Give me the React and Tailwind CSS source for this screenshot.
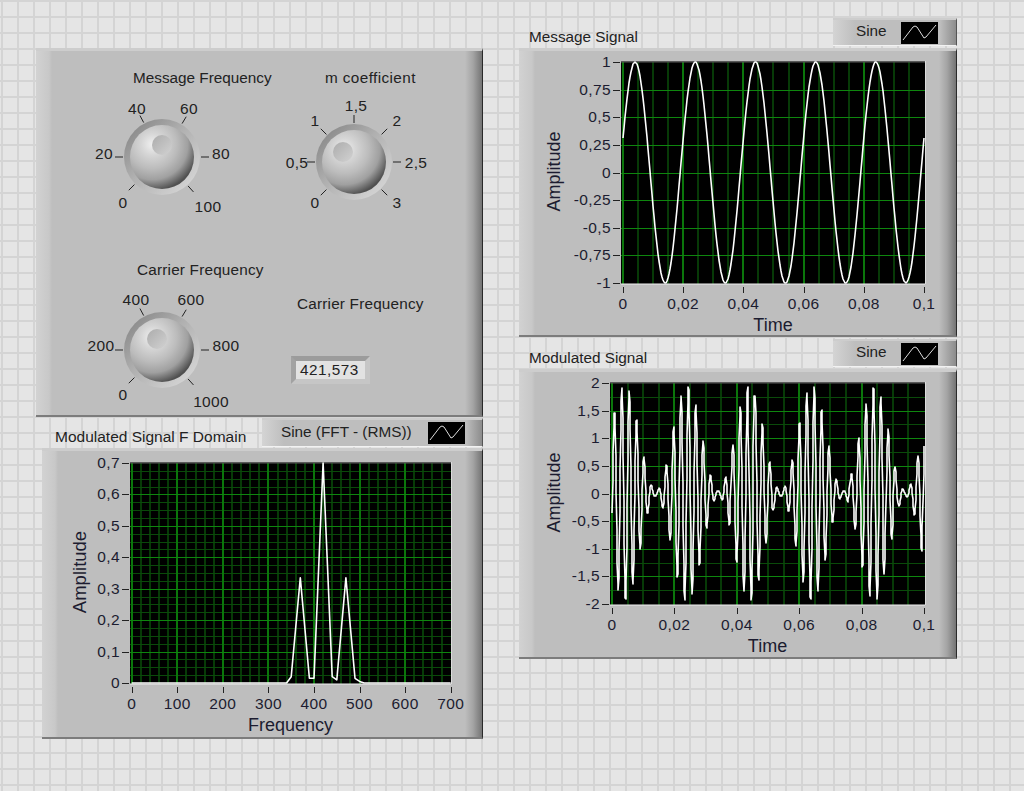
const FONT = { fontFamily: '"Liberation Sans", Arial, sans-serif' }

function range(start, end, step) {
  const out = []
  for (let v = start; v <= end + 1e-9; v += step) out.push(v)
  return out
}

function Panel({ className = '', children }) {
  return (
    <div className={`relative border-t-[3px] border-b-2 border-r border-t-[#cdcdcd] border-b-[#7c7c7c] border-r-[#2a2a2a] bg-[linear-gradient(to_right,#d2d2d2_0,#c8c8c8_13px,#bebebe_16px,#bebebe_calc(100%-17px),#a4a4a4_calc(100%-9px),#747474_100%)] ${className}`}>
      {children}
    </div>
  )
}

function SineSwatch({ className = '' }) {
  return (
    <svg viewBox="0 0 37 22" className={`block bg-black ${className}`}>
      <polyline points="2,18 12,5 14,4 16,5 23,16 25,15 35,3" fill="none" stroke="#dcdcdc" strokeWidth="1" />
    </svg>
  )
}

function Legend({ label, className = '' }) {
  return (
    <div className={`flex items-center border-t-2 border-b border-r border-t-[#cdcdcd] border-b-[#f2f2f2] border-r-[#555] bg-[linear-gradient(to_right,#d4d4d4_0,#c6c6c6_14px,#bebebe_22px,#bebebe_calc(100%-16px),#8c8c8c_100%)] ${className}`}>
      <span className="pb-[3px] text-[15.3px] leading-none text-[#222] whitespace-nowrap">{label}</span>
      <SineSwatch className="w-[37px] h-[22px]" />
    </div>
  )
}

function Knob({ dimple, scale, className = '' }) {
  return (
    <div className={`relative w-[78px] h-[78px] ${className}`}>
      <div className="absolute inset-[1px] rounded-full bg-[linear-gradient(135deg,#8c8c8c_12%,#b0b0b0_45%,#d4d4d4_88%)]" />
      <div className="absolute inset-[7px] rounded-full bg-[radial-gradient(circle_at_35%_30%,#f0f0f0_0,#d6d6d6_18%,#bcbcbc_40%,#a0a0a0_58%,#505050_76%)]" />
      <div
        className="absolute w-[20px] h-[20px] rounded-full bg-[linear-gradient(135deg,#acacac,#d2d2d2)]"
        style={{ left: 29 + dimple[0], top: 29 + dimple[1] }}
      />
      {scale.map((s) => (
        <span
          key={s.t}
          className="absolute -translate-x-1/2 -translate-y-1/2 text-[15.5px] leading-none tracking-[0.3px] text-[#222] whitespace-nowrap"
          style={{ left: 39 + s.x, top: 39 + s.y }}
        >
          {s.t}
        </span>
      ))}
      <svg className="absolute left-[-20px] top-[-20px] w-[118px] h-[118px] overflow-visible" viewBox="-59 -59 118 118">
        {scale.map((s) => {
          const a = (s.a * Math.PI) / 180
          return (
            <line
              key={s.t}
              x1={Math.cos(a) * 39}
              y1={Math.sin(a) * 39}
              x2={Math.cos(a) * 47}
              y2={Math.sin(a) * 47}
              stroke="#222"
              strokeWidth="1"
            />
          )
        })}
      </svg>
    </div>
  )
}

function Graph({ w, h, plot, xTicks, yTicks, xMinor, yMinor, xLabel, yLabelX, yLabelSize = 18, trace, snap = false }) {
  const sx = (v) => plot.x0 + ((v - plot.xMin) / (plot.xMax - plot.xMin)) * (plot.x1 - plot.x0)
  const sy = (v) => plot.y0 + ((plot.yMax - v) / (plot.yMax - plot.yMin)) * (plot.y1 - plot.y0)
  const gx = (v) => Math.round(sx(v))
  const gy = (v) => Math.round(sy(v)) + 0.5
  const inX = (v) => gx(v) > plot.left + 1 && gx(v) < plot.right - 1
  const inY = (v) => gy(v) > plot.top + 2 && gy(v) < plot.bottom - 1
  const pts = trace
    .map(([a, b]) => (snap ? `${Math.round(sx(a))},${Math.round(sy(b))}` : `${sx(a).toFixed(1)},${sy(b).toFixed(1)}`))
    .join(' ')
  return (
    <svg width={w} height={h} className="block" style={FONT}>
      <rect x={plot.left} y={plot.top} width={plot.right - plot.left} height={plot.bottom - plot.top} fill="#000" />
      {xMinor.filter(inX).map((v) => (
        <line key={v} x1={gx(v)} x2={gx(v)} y1={plot.top} y2={plot.bottom} stroke="#073a07" strokeWidth="2" />
      ))}
      {yMinor.filter(inY).map((v) => (
        <line key={v} y1={gy(v)} y2={gy(v)} x1={plot.left} x2={plot.right} stroke="#0a4a0a" />
      ))}
      {xTicks.filter((t) => inX(t.v)).map((t) => (
        <line key={t.v} x1={gx(t.v)} x2={gx(t.v)} y1={plot.top} y2={plot.bottom} stroke="#0b760b" strokeWidth="2" />
      ))}
      {yTicks.filter((t) => inY(t.v)).map((t) => (
        <line key={t.v} y1={gy(t.v)} y2={gy(t.v)} x1={plot.left} x2={plot.right} stroke="#0e860e" />
      ))}
      <rect x={plot.left} y={plot.top} width={plot.right - plot.left} height="1.5" fill="#5a5a5a" />
      <polyline points={pts} fill="none" stroke="#fff" strokeWidth="1.6" strokeLinejoin="round" />
      <line x1={plot.left} x2={plot.right} y1={plot.bottom} y2={plot.bottom} stroke="#efefef" />
      <line x1={plot.right + 0.5} x2={plot.right + 0.5} y1={plot.top} y2={plot.bottom} stroke="#dcdcdc" />
      {xTicks.map((t) => (
        <g key={t.v}>
          <line x1={gx(t.v) + 0.5} x2={gx(t.v) + 0.5} y1={plot.bottom + 3} y2={plot.bottom + 9} stroke="#222" />
          <text x={sx(t.v)} y={plot.bottom + 25} textAnchor="middle" fontSize="15.5" letterSpacing="0.4" fill="#1c1c30">{t.t}</text>
        </g>
      ))}
      {yTicks.map((t) => (
        <g key={t.v}>
          <line x1={plot.left - 8} x2={plot.left - 1} y1={gy(t.v)} y2={gy(t.v)} stroke="#222" />
          <text x={plot.left - 10} y={sy(t.v) + 5} textAnchor="end" fontSize="15.5" letterSpacing="0.4" fill="#1c1c30">{t.t}</text>
        </g>
      ))}
      <text x={(plot.left + plot.right) / 2} y={plot.bottom + 47} textAnchor="middle" fontSize="18" fill="#1c1c30">{xLabel}</text>
      <text
        transform={`translate(${yLabelX} ${(plot.top + plot.bottom) / 2 - 1}) rotate(-90)`}
        textAnchor="middle"
        fontSize={yLabelSize}
        fill="#1c1c30"
      >
        Amplitude
      </text>
    </svg>
  )
}

const timeTicks = [0, 0.02, 0.04, 0.06, 0.08, 0.1].map((v) => ({ v, t: String(v).replace('.', ',') }))

const msg = (t) => Math.sin(2 * Math.PI * 50 * t + 0.1 * Math.PI)
// roughly one sample per pixel gives the stepped look of the trace
const msgTrace = range(0, 301, 1).map((i) => {
  const t = i / 3010
  return [t, msg(t)]
})
const modTrace = range(0, 624, 1).map((i) => {
  const t = i / 6240
  return [t, (1 + 0.95 * msg(t)) * Math.sin(2 * Math.PI * 421.573 * t - 0.27)]
})

const specTrace = [
  [0, 0], [340, 0], [350, 0.02], [370, 0.335], [390, 0.015], [400, 0.015], [420, 0.7],
  [440, 0.02], [450, 0.01], [470, 0.335], [490, 0.015], [500, 0.005], [510, 0], [700, 0],
]

export default function App() {
  return (
    <div
      className="flex w-[1024px] h-[791px] overflow-hidden bg-[#e5e5e5] bg-[linear-gradient(to_right,#d4d4d4_2px,transparent_2px),linear-gradient(to_bottom,#d4d4d4_2px,transparent_2px)] bg-[size:16px_16px] bg-[position:1px_0px] text-[#222]"
      style={FONT}
    >
      {/* left column */}
      <div className="ml-[36px] w-[447px] pt-[48px]">
        <Panel className="h-[369px]">
          <div className="grid grid-cols-[245px_1fr]">
            <div className="h-[193px] pt-[19px]">
              <p className="ml-[97px] text-[15.3px] leading-none whitespace-nowrap">Message Frequency</p>
              <Knob
                className="ml-[87px] mt-[33px]"
                dimple={[0, -12]}
                scale={[
                  { t: '40', a: -118, x: -25, y: -48 },
                  { t: '60', a: -59, x: 27, y: -48 },
                  { t: '20', a: 180, x: -58, y: -3 },
                  { t: '80', a: 0, x: 59, y: -3 },
                  { t: '0', a: 135, x: -39, y: 46 },
                  { t: '100', a: 48, x: 46, y: 50 },
                ]}
              />
            </div>
            <div className="h-[193px] pt-[19px]">
              <p className="ml-[44px] text-[15.3px] leading-none tracking-[0.4px] whitespace-nowrap">m coefficient</p>
              <Knob
                className="ml-[34px] mt-[38px]"
                dimple={[-11, -10]}
                scale={[
                  { t: '1,5', a: -90, x: 2, y: -56 },
                  { t: '1', a: -135, x: -39, y: -41 },
                  { t: '2', a: -45, x: 43, y: -41 },
                  { t: '0,5', a: 180, x: -57, y: 1 },
                  { t: '2,5', a: 0, x: 62, y: 1 },
                  { t: '0', a: 135, x: -39, y: 41 },
                  { t: '3', a: 45, x: 43, y: 41 },
                ]}
              />
            </div>
            <div className="pt-[18px]">
              <p className="ml-[101px] text-[15.3px] leading-none tracking-[0.2px] whitespace-nowrap">Carrier Frequency</p>
              <Knob
                className="ml-[87px] mt-[34px]"
                dimple={[-5, -11]}
                scale={[
                  { t: '400', a: -118, x: -26, y: -50 },
                  { t: '600', a: -59, x: 29, y: -50 },
                  { t: '200', a: 180, x: -61, y: -4 },
                  { t: '800', a: 0, x: 64, y: -4 },
                  { t: '0', a: 135, x: -39, y: 45 },
                  { t: '1000', a: 48, x: 49, y: 52 },
                ]}
              />
            </div>
            <div className="pt-[52px]">
              <p className="ml-[16px] text-[15.3px] leading-none tracking-[0.2px] whitespace-nowrap">Carrier Frequency</p>
              <div className="ml-[10px] mt-[45px] w-[79px] h-[28px] border-[5px] border-t-[#9c9c9c] border-l-[#a2a2a2] border-b-[#c6c6c6] border-r-[#c6c6c6] bg-[#e2e2e2] pl-[4px] text-[15.3px] leading-[18px] tracking-[0.5px]">
                421,573
              </div>
            </div>
          </div>
        </Panel>

        <div className="flex h-[31px] items-end">
          <p className="ml-[19px] w-[207px] pb-[4px] text-[15.5px] leading-none whitespace-nowrap">Modulated Signal F Domain</p>
          <Legend label="Sine (FFT - (RMS))" className="mb-[1px] w-[221px] h-[29px] pl-[19px] gap-[16px]" />
        </div>

        <Panel className="ml-[6px] h-[291px]">
          <Graph
            w={440}
            h={286}
            plot={{ left: 88, right: 409, top: 11, bottom: 233, x0: 89.7, x1: 408.7, y0: 12, y1: 232, xMin: 0, xMax: 700, yMin: 0, yMax: 0.7 }}
            xTicks={range(0, 700, 100).map((v) => ({ v, t: String(v) }))}
            yTicks={range(0, 7, 1).map((i) => ({ v: i / 10, t: i === 0 ? '0' : `0,${i}` }))}
            xMinor={range(0, 700, 20)}
            yMinor={range(0, 0.7, 0.025)}
            xLabel="Frequency"
            yLabelX={44}
            yLabelSize={18.5}
            trace={specTrace}
          />
        </Panel>
      </div>

      {/* right column */}
      <div className="ml-[36px] w-[438px] pt-[18px]">
        <div className="flex h-[30px] items-end justify-between">
          <p className="ml-[10px] pb-[4px] text-[15.3px] leading-none">Message Signal</p>
          <Legend label="Sine" className="mb-[2px] w-[124px] h-[28px] pl-[23px] gap-[14px]" />
        </div>
        <Panel className="h-[289px]">
          <Graph
            w={437}
            h={284}
            plot={{ left: 102, right: 406, top: 10, bottom: 233, x0: 104, x1: 405, y0: 11, y1: 232, xMin: 0, xMax: 0.1, yMin: -1, yMax: 1 }}
            xTicks={timeTicks}
            yTicks={range(-4, 4, 1).map((i) => ({ v: i / 4, t: String(i / 4).replace('.', ',') }))}
            xMinor={range(0, 0.1, 0.005)}
            yMinor={[]}
            xLabel="Time"
            yLabelX={41}
            trace={msgTrace}
            snap
          />
        </Panel>

        <div className="flex h-[32px] items-end justify-between">
          <p className="ml-[10px] pb-[4px] text-[15.3px] leading-none">Modulated Signal</p>
          <Legend label="Sine" className="mb-[2px] w-[124px] h-[28px] pl-[23px] gap-[14px]" />
        </div>
        <Panel className="h-[290px]">
          <Graph
            w={437}
            h={285}
            plot={{ left: 91, right: 406, top: 10, bottom: 233, x0: 93, x1: 405, y0: 11, y1: 232, xMin: 0, xMax: 0.1, yMin: -2, yMax: 2 }}
            xTicks={timeTicks}
            yTicks={range(-4, 4, 1).map((i) => ({ v: i / 2, t: String(i / 2).replace('.', ',') }))}
            xMinor={range(0, 0.1, 0.005)}
            yMinor={range(-2, 2, 0.25)}
            xLabel="Time"
            yLabelX={41}
            trace={modTrace}
            snap
          />
        </Panel>
      </div>
    </div>
  )
}
